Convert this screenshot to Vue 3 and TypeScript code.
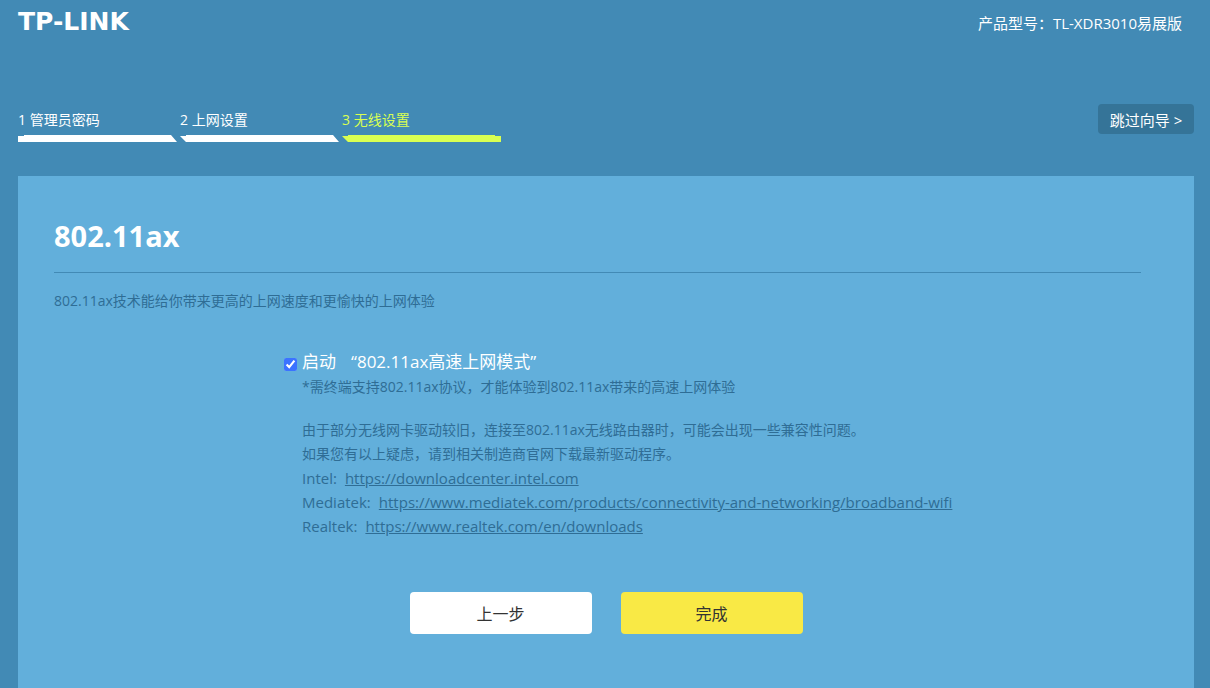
<script setup lang="ts">
import { ref } from 'vue'

interface Step {
  label: string
  shape: string
  active: boolean
}

interface Driver {
  vendor: string
  url: string
}

const steps: Step[] = [
  { label: '1 管理员密码', shape: 'first', active: false },
  { label: '2 上网设置', shape: 'middle', active: false },
  { label: '3 无线设置', shape: 'last', active: true },
]

const drivers: Driver[] = [
  { vendor: 'Intel:', url: 'https://downloadcenter.intel.com' },
  {
    vendor: 'Mediatek:',
    url: 'https://www.mediatek.com/products/connectivity-and-networking/broadband-wifi',
  },
  { vendor: 'Realtek:', url: 'https://www.realtek.com/en/downloads' },
]

const enabled = ref<boolean>(true)
</script>

<template>
  <div class="page">
    <header class="top">
      <span class="logo">TP-LINK</span>
      <span class="model">产品型号：TL-XDR3010易展版</span>
    </header>

    <nav class="wizard">
      <ol class="steps">
        <li v-for="s in steps" :key="s.label" class="step" :class="{ active: s.active }">
          <span>{{ s.label }}</span>
          <span class="bar" :class="s.shape"></span>
        </li>
      </ol>
      <button type="button" class="skip">跳过向导 &gt;</button>
    </nav>

    <main class="panel">
      <h1>802.11ax</h1>
      <p class="intro">802.11ax技术能给你带来更高的上网速度和更愉快的上网体验</p>

      <section class="option">
        <input id="ax-mode" v-model="enabled" type="checkbox" />
        <label for="ax-mode"><span>启动</span><span>“802.11ax高速上网模式”</span></label>
        <div class="notes">
          <p class="hint">*需终端支持802.11ax协议，才能体验到802.11ax带来的高速上网体验</p>
          <p>由于部分无线网卡驱动较旧，连接至802.11ax无线路由器时，可能会出现一些兼容性问题。</p>
          <p>如果您有以上疑虑，请到相关制造商官网下载最新驱动程序。</p>
          <p v-for="d in drivers" :key="d.vendor" class="driver">
            <span>{{ d.vendor }}</span>
            <a :href="d.url">{{ d.url }}</a>
          </p>
        </div>
      </section>

      <div class="actions">
        <button type="button" class="prev">上一步</button>
        <button type="button" class="done">完成</button>
      </div>
    </main>
  </div>
</template>

<style>
body {
  margin: 0;
  background: #428ab5;
}
</style>

<style scoped>
.page {
  box-sizing: border-box;
  min-height: 100vh;
  display: flex;
  flex-direction: column;
  padding: 0 16px 0 18px;
  background: #428ab5;
  color: #fff;
  font-family: "Open Sans", "Noto Sans CJK SC", sans-serif;
  font-size: 14px;
  line-height: 24px;
}

.page button {
  border: 0;
  border-radius: 4px;
  padding: 0;
  font-family: inherit;
  cursor: pointer;
}

.top {
  display: flex;
  justify-content: space-between;
  align-items: flex-start;
  padding: 10px 12px 0 0;
}

.logo {
  font: bold 25px/24px "DejaVu Sans", sans-serif;
}

.model {
  padding-top: 1px;
  font-size: 15px;
}

.wizard {
  display: flex;
  justify-content: space-between;
  align-items: flex-start;
  margin-top: 69px;
}

.steps {
  display: flex;
  gap: 3px;
  margin: 0;
  padding: 4px 0 0;
  list-style: none;
}

.step {
  display: flex;
  flex-direction: column;
  gap: 3px;
  width: 159px;
}

.step.active {
  color: #d9ff52;
}

.bar {
  height: 7px;
  background: currentColor;
}

.first {
  clip-path: polygon(0 1px, 6px 1px, 6px 0, 153px 0, 100% 100%, 0 100%);
}

.middle {
  clip-path: polygon(0 1px, 6px 1px, 6px 0, 153px 0, 100% 100%, 6px 100%);
}

.last {
  clip-path: polygon(0 1px, 6px 1px, 6px 0, 153px 0, 153px 1px, 100% 1px, 100% 100%, 6px 100%);
}

.page .skip {
  width: 96px;
  height: 30px;
  background: #357498;
  color: #fff;
  font-size: 15px;
}

.panel {
  flex: 1;
  margin-top: 34px;
  padding: 36px 36px 54px;
  background: #62afdb;
}

h1 {
  margin: 0 17px 0 0;
  padding: 4px 0 16px;
  border-bottom: 1px solid #428ab5;
  font-size: 29px;
  line-height: 40px;
}

p {
  margin: 0;
}

.intro {
  margin-top: 16px;
  color: #2f6d95;
}

.option {
  display: grid;
  grid-template-columns: 14px minmax(0, 1fr);
  column-gap: 4px;
  align-items: center;
  max-width: 644px;
  margin: 37px auto 0;
}

.option input {
  width: 13px;
  height: 13px;
  margin: 4px 0 0;
  accent-color: #3b73ff;
}

.option label {
  display: flex;
  gap: 15px;
  font-size: 17px;
  line-height: 24px;
}

.notes {
  grid-column: 2;
  margin-top: 1px;
  color: #2f6d95;
  white-space: nowrap;
}

.hint {
  margin-bottom: 19px;
}

.driver {
  display: flex;
  gap: 8px;
  font-size: 15px;
}

.driver a {
  color: inherit;
  text-decoration: underline;
}

.actions {
  display: flex;
  justify-content: center;
  gap: 29px;
  margin-top: 54px;
}

.actions button {
  width: 182px;
  height: 42px;
  color: #333;
  font-size: 16px;
}

.actions .prev {
  background: #fff;
}

.actions .done {
  background: #f9e945;
}
</style>
